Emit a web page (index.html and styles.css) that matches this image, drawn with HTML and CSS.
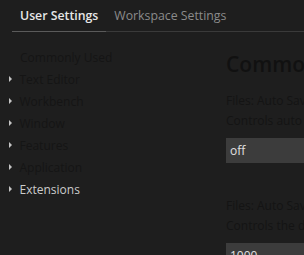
FILE: index.html
```html
<!DOCTYPE html>
<html lang="en">
<head>
    <meta charset="UTF-8">
    <title>Settings</title>
    <link rel="stylesheet" href="styles.css">
</head>
<body>
    <div class="tabs">
        <span class="tab active">User Settings</span>
        <span class="tab">Workspace Settings</span>
    </div>
    <div class="editor">
        <ul class="toc">
            <li class="leaf">Commonly Used</li>
            <li><span class="twisty"></span>Text Editor</li>
            <li><span class="twisty"></span>Workbench</li>
            <li><span class="twisty"></span>Window</li>
            <li><span class="twisty"></span>Features</li>
            <li><span class="twisty"></span>Application</li>
            <li class="bright"><span class="twisty"></span>Extensions</li>
        </ul>
        <main class="settings">
            <h1>Commonly Used</h1>
            <div class="setting">
                <p class="label">Files: Auto Save</p>
                <p class="desc">Controls auto save of dirty files.</p>
                <div class="field">off</div>
            </div>
            <div class="setting">
                <p class="label">Files: Auto Save Delay</p>
                <p class="desc">Controls the delay in ms after which a dirty file is saved.</p>
                <div class="field">1000</div>
            </div>
        </main>
    </div>
</body>
</html>
```

FILE: styles.css
```css
body {
    margin: 0;
    background-color: #1e1e1e;
    font-family: "Open Sans", sans-serif;
    font-size: 12px;
    overflow: hidden;
    height: 255px;
}

.tabs {
    display: flex;
    margin-left: 12px;
    border-bottom: 1px solid #3a3a3a;
    height: 31px;
    font-size: 12.3px;
}

.tab {
    padding: 0 8px;
    line-height: 31px;
    color: #8b8b8b;
    white-space: nowrap;
}

.tab.active {
    color: #e7e7e7;
    font-weight: 600;
    border-bottom: 1px solid #5a5a5a;
    margin-bottom: -1px;
}

.editor {
    display: flex;
}

.toc {
    list-style: none;
    margin: 0;
    padding: 14px 0 0 0;
    width: 226px;
    flex-shrink: 0;
}

.toc li {
    display: flex;
    align-items: center;
    height: 22px;
    color: #151515;
    white-space: nowrap;
}

.toc li.leaf {
    padding-left: 20px;
}

.toc li.bright {
    color: #cccccc;
}

.twisty {
    width: 0;
    height: 0;
    border-top: 3.5px solid transparent;
    border-bottom: 3.5px solid transparent;
    border-left: 3.5px solid #c5c5c5;
    margin: 0 7.5px 0 9px;
}

.settings {
    padding-top: 17px;
    white-space: nowrap;
    overflow: hidden;
    flex-grow: 1;
}

.settings h1 {
    margin: 0 0 12px 0;
    font-size: 21px;
    font-weight: 600;
    line-height: 30px;
    color: #111111;
}

.label,
.desc {
    margin: 0;
    line-height: 20px;
    color: #141414;
}

.field {
    margin-top: 7px;
    width: 200px;
    height: 25px;
    line-height: 25px;
    padding: 0 4px;
    background-color: #3c3c3c;
    color: #e0e0e0;
}

.setting {
    margin-bottom: 33px;
}
```
